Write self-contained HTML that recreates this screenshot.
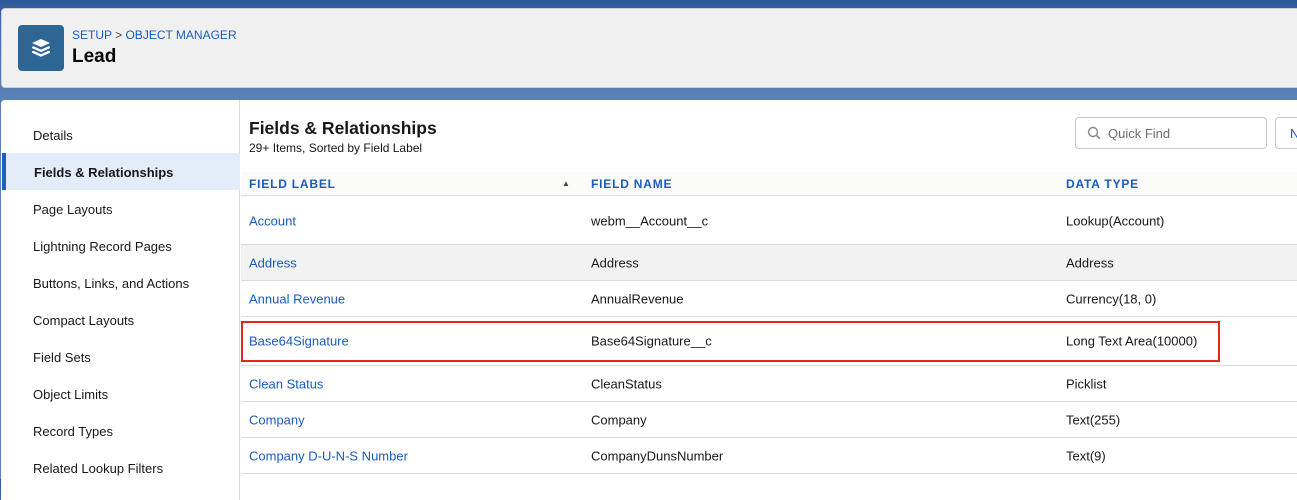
<!DOCTYPE html>
<html><head><meta charset="utf-8"><style>
*{margin:0;padding:0;box-sizing:border-box}
body{width:1297px;height:479px;overflow:hidden;font-family:"Liberation Sans",sans-serif;background:linear-gradient(#2b5797 0,#3e69a6 20px,#587fb5 90px,#5b82b8 100px);position:relative}
.hdr{position:absolute;left:1px;top:8px;width:1300px;height:80px;background:#f0f0f0;border:1px solid #d0d0d0;border-radius:4px}
.icon{position:absolute;left:16px;top:16px;width:46px;height:46px;background:#2d6595;border-radius:4px}
.crumb{position:absolute;left:70px;top:19px;font-size:12px;color:#1a5bbf}
.crumb span{color:#3e3e3c}
.title{position:absolute;left:70px;top:37px;font-size:19px;font-weight:bold;color:#080707}
.main{position:absolute;left:1px;top:100px;width:1300px;height:400px;background:#fff;border-radius:4px 0 0 0}
.side{position:absolute;left:0;top:0;width:239px;height:400px;border-right:1px solid #dddbda}
.si{position:absolute;left:1px;width:238px;height:37px;line-height:39px;padding-left:31px;font-size:13px;color:#181818}
.si.act{background:#e2edf9;font-weight:bold;border-left:4px solid #1b5fbf;padding-left:28px}
.h1{position:absolute;left:248px;top:18px;font-size:17.5px;font-weight:bold;color:#181818}
.sub{position:absolute;left:248px;top:41px;font-size:12px;color:#181818}
.qf{position:absolute;left:1074px;top:17px;width:192px;height:32px;border:1px solid #c9c7c5;border-radius:4px;font-size:13px;color:#706e6b;line-height:31px;padding-left:32px}
.nb{position:absolute;left:1274px;top:17px;width:40px;height:32px;border:1px solid #c9c7c5;border-radius:4px;font-size:13px;color:#1a5bbf;line-height:31px;padding-left:14px}
.th{position:absolute;left:240px;top:72px;width:1060px;height:24px;background:#fafaf9;border-bottom:1px solid #dddbda}
.th div{position:absolute;top:5px;font-size:12px;font-weight:bold;color:#1a5bbf;letter-spacing:.8px}
.row{position:absolute;left:240px;width:1060px;border-bottom:1px solid #dddbda;font-size:13px;color:#181818}
.row div{position:absolute;top:50%;transform:translateY(-50%);white-space:nowrap}
.row .a{left:8px;color:#1a5bbf}.row .b{left:350px}.row .c{left:825px}
.red{position:absolute;left:240px;top:221px;width:979px;height:41px;border:2px solid #e0281c}
</style></head><body>
<div class="hdr">
 <div class="icon"><svg width="46" height="46" viewBox="0 0 46 46"><g fill="#fff"><path d="M23 14l9 4-9 4-9-4z"/><path d="M15.5 21.2l7.5 3.4 7.5-3.4 1.5.7v1.2l-9 4-9-4v-1.2z"/><path d="M15.5 25.8l7.5 3.4 7.5-3.4 1.5.7v1.2l-9 4-9-4v-1.2z"/></g></svg></div>
 <div class="crumb">SETUP <span>&gt;</span> OBJECT MANAGER</div>
 <div class="title">Lead</div>
</div>
<div class="main">
 <div class="side">
  <div class="si" style="top:16px">Details</div>
  <div class="si act" style="top:53px">Fields &amp; Relationships</div>
  <div class="si" style="top:90px">Page Layouts</div>
  <div class="si" style="top:127px">Lightning Record Pages</div>
  <div class="si" style="top:164px">Buttons, Links, and Actions</div>
  <div class="si" style="top:201px">Compact Layouts</div>
  <div class="si" style="top:238px">Field Sets</div>
  <div class="si" style="top:275px">Object Limits</div>
  <div class="si" style="top:312px">Record Types</div>
  <div class="si" style="top:349px">Related Lookup Filters</div>
 </div>
 <div class="h1">Fields &amp; Relationships</div>
 <div class="sub">29+ Items, Sorted by Field Label</div>
 <div class="qf"><svg style="position:absolute;left:11px;top:8px" width="14" height="14" viewBox="0 0 14 14"><circle cx="6" cy="6" r="4.5" fill="none" stroke="#8a8886" stroke-width="1.4"/><path d="M9.3 9.3l3.5 3.5" stroke="#8a8886" stroke-width="1.5"/></svg>Quick Find</div>
 <div class="nb">N</div>
 <div class="th"><div style="left:8px">FIELD LABEL</div><div style="left:321px;top:7px;font-size:8px;color:#3e3e3c">&#9650;</div><div style="left:350px">FIELD NAME</div><div style="left:825px">DATA TYPE</div></div>
 <div class="row" style="top:97px;height:48px"><div class="a">Account</div><div class="b">webm__Account__c</div><div class="c">Lookup(Account)</div></div>
 <div class="row" style="top:145px;height:36px;background:#f3f2f2"><div class="a">Address</div><div class="b">Address</div><div class="c">Address</div></div>
 <div class="row" style="top:181px;height:36px"><div class="a">Annual Revenue</div><div class="b">AnnualRevenue</div><div class="c">Currency(18, 0)</div></div>
 <div class="row" style="top:217px;height:49px"><div class="a">Base64Signature</div><div class="b">Base64Signature__c</div><div class="c">Long Text Area(10000)</div></div>
 <div class="row" style="top:266px;height:36px"><div class="a">Clean Status</div><div class="b">CleanStatus</div><div class="c">Picklist</div></div>
 <div class="row" style="top:302px;height:36px"><div class="a">Company</div><div class="b">Company</div><div class="c">Text(255)</div></div>
 <div class="row" style="top:338px;height:36px"><div class="a">Company D-U-N-S Number</div><div class="b">CompanyDunsNumber</div><div class="c">Text(9)</div></div>
 <div class="red"></div>
</div>
</body></html>
